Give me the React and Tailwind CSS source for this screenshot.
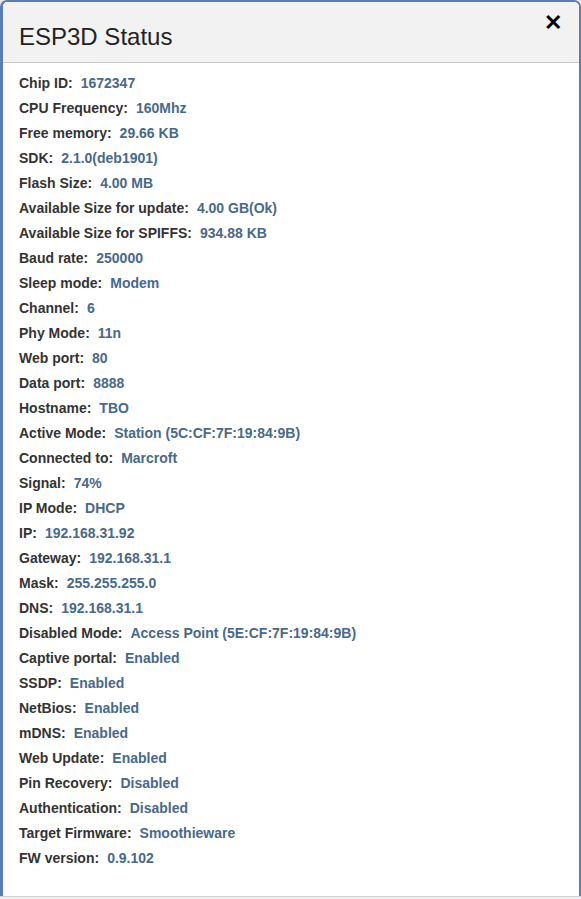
import React from "react";

const rows = [
  ["Chip ID", "1672347"],
  ["CPU Frequency", "160Mhz"],
  ["Free memory", "29.66 KB"],
  ["SDK", "2.1.0(deb1901)"],
  ["Flash Size", "4.00 MB"],
  ["Available Size for update", "4.00 GB(Ok)"],
  ["Available Size for SPIFFS", "934.88 KB"],
  ["Baud rate", "250000"],
  ["Sleep mode", "Modem"],
  ["Channel", "6"],
  ["Phy Mode", "11n"],
  ["Web port", "80"],
  ["Data port", "8888"],
  ["Hostname", "TBO"],
  ["Active Mode", "Station (5C:CF:7F:19:84:9B)"],
  ["Connected to", "Marcroft"],
  ["Signal", "74%"],
  ["IP Mode", "DHCP"],
  ["IP", "192.168.31.92"],
  ["Gateway", "192.168.31.1"],
  ["Mask", "255.255.255.0"],
  ["DNS", "192.168.31.1"],
  ["Disabled Mode", "Access Point (5E:CF:7F:19:84:9B)"],
  ["Captive portal", "Enabled"],
  ["SSDP", "Enabled"],
  ["NetBios", "Enabled"],
  ["mDNS", "Enabled"],
  ["Web Update", "Enabled"],
  ["Pin Recovery", "Disabled"],
  ["Authentication", "Disabled"],
  ["Target Firmware", "Smoothieware"],
  ["FW version", "0.9.102"],
];

export default function App() {
  return (
    <div
      className="w-[581px] h-[899px] bg-[#e8e8e8] flex flex-col"
      style={{ fontFamily: '"Liberation Sans", Arial, sans-serif' }}
    >
      <div className="flex-1 flex flex-col bg-white border-l-[3px] border-r-[2px] border-t-[2px] border-[#5b7db5] rounded-t-[7px] overflow-hidden">
        <div className="h-[61px] bg-[#f2f2f2] border-b border-[#c8c8c8] flex items-start justify-between pl-[16px] pr-[16px]">
          <h1 className="text-[24px] leading-[26px] text-[#222] mt-[22px]">ESP3D Status</h1>
          <span className="text-[22px] font-bold leading-none text-black mt-[10px] mr-[1px]">✕</span>
        </div>
        <div className="flex-1 pt-[8px] pl-[16px] text-[14px] font-bold">
          {rows.map(([k, v]) => (
            <div key={k} className="leading-[25px] whitespace-nowrap">
              <span className="text-[#333]">{k}:</span>
              <span className="ml-[8px] text-[#48698a]">{v}</span>
            </div>
          ))}
        </div>
      </div>
      <div className="h-[3px] bg-[#f0f0f0] border-t border-[#cfcfcf]"></div>
    </div>
  );
}
